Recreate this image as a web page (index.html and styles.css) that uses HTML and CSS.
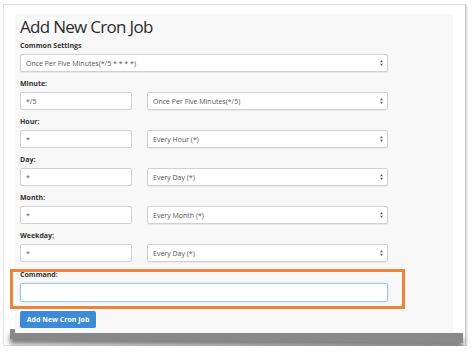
FILE: index.html
```html
<!DOCTYPE html>
<html lang="en">
<head>
<meta charset="UTF-8" />
<title>Add New Cron Job</title>
<link rel="stylesheet" href="styles.css">
</head>
<body>

<div class="sheet">
    <div class="panel">
        <h1>Add New Cron Job</h1>

        <div class="field">
            <label class="field-label">Common Settings</label>
            <div class="select-wrap">
                <select><option>Once Per Five Minutes(*/5 * * * *)</option></select>
                <svg class="arrows" viewBox="0 0 4 8"><path d="M2 0L4 3H0z M2 8L4 5H0z"/></svg>
            </div>
        </div>

        <div class="field">
            <label class="field-label">Minute:</label>
            <div class="pair">
                <input type="text" value="*/5" />
                <div class="select-wrap">
                    <select><option>Once Per Five Minutes(*/5)</option></select>
                    <svg class="arrows" viewBox="0 0 4 8"><path d="M2 0L4 3H0z M2 8L4 5H0z"/></svg>
                </div>
            </div>
        </div>

        <div class="field">
            <label class="field-label">Hour:</label>
            <div class="pair">
                <input type="text" value="*" />
                <div class="select-wrap">
                    <select><option>Every Hour (*)</option></select>
                    <svg class="arrows" viewBox="0 0 4 8"><path d="M2 0L4 3H0z M2 8L4 5H0z"/></svg>
                </div>
            </div>
        </div>

        <div class="field">
            <label class="field-label">Day:</label>
            <div class="pair">
                <input type="text" value="*" />
                <div class="select-wrap">
                    <select><option>Every Day (*)</option></select>
                    <svg class="arrows" viewBox="0 0 4 8"><path d="M2 0L4 3H0z M2 8L4 5H0z"/></svg>
                </div>
            </div>
        </div>

        <div class="field">
            <label class="field-label">Month:</label>
            <div class="pair">
                <input type="text" value="*" />
                <div class="select-wrap">
                    <select><option>Every Month (*)</option></select>
                    <svg class="arrows" viewBox="0 0 4 8"><path d="M2 0L4 3H0z M2 8L4 5H0z"/></svg>
                </div>
            </div>
        </div>

        <div class="field">
            <label class="field-label">Weekday:</label>
            <div class="pair">
                <input type="text" value="*" />
                <div class="select-wrap">
                    <select><option>Every Day (*)</option></select>
                    <svg class="arrows" viewBox="0 0 4 8"><path d="M2 0L4 3H0z M2 8L4 5H0z"/></svg>
                </div>
            </div>
        </div>

        <div class="field command">
            <label class="field-label">Command:</label>
            <input type="text" class="command-input" value="" />
        </div>

        <button class="add-button">Add New Cron Job</button>
    </div>
</div>

</body>
</html>
```

FILE: styles.css
```css
:root {
    --font-family: 'Open Sans', 'Noto Sans', Arial, sans-serif;
    --text-color: #333;
    --border-color: #d0d0d0;
    --panel-bg: #f8f8f8;
    --highlight: #f0833a;
    --primary: #3d8ad6;
}

body {
    margin: 0;
    background: #fff;
    font-family: var(--font-family);
    color: var(--text-color);
}

.sheet {
    position: relative;
    z-index: 0;
    box-sizing: border-box;
    width: 463px;
    height: 342px;
    margin: 4px 0 0 3px;
    padding: 9px 12px 12px 11px;
    background: #fff;
    border: 1px solid #e4e4e4;
    border-right-color: #c8c8c8;
    box-shadow: 1px 1px 2px rgba(0, 0, 0, 0.18);
}

/* curled paper shadow under the sheet */
.sheet::after {
    content: "";
    position: absolute;
    left: 6px;
    right: 2px;
    bottom: 6px;
    height: 10px;
    background: #888;
    box-shadow: 0 5px 5px rgba(0, 0, 0, 0.5);
    transform: rotate(0.5deg);
    transform-origin: left bottom;
    z-index: -1;
}

.panel {
    height: 100%;
    box-sizing: border-box;
    padding: 3px 0 0 5px;
    background: var(--panel-bg);
}

h1 {
    margin: 0 0 4px;
    font-size: 17px;
    line-height: 20px;
    font-weight: 400;
    letter-spacing: -0.7px;
    color: #2b2b2b;
}

.field {
    width: 368px;
    margin-bottom: 7px;
}

.field-label {
    display: block;
    font-size: 7px;
    line-height: 10px;
    font-weight: 700;
    margin-bottom: 3px;
}

.pair {
    display: flex;
    gap: 15px;
}

input,
select {
    display: block;
    box-sizing: border-box;
    height: 18px;
    margin: 0;
    padding: 0 5px;
    font-family: var(--font-family);
    font-size: 7px;
    color: #555;
    background: #fff;
    border: 1px solid var(--border-color);
    border-radius: 2px;
    outline: none;
}

.pair input {
    width: 112px;
    flex-shrink: 0;
}

.select-wrap {
    position: relative;
    flex: 1;
}

.select-wrap select {
    width: 100%;
    appearance: none;
    -webkit-appearance: none;
    box-shadow: 0 1px 1px rgba(0, 0, 0, 0.06);
}

.arrows {
    position: absolute;
    right: 5px;
    top: 6px;
    width: 3px;
    height: 6px;
    fill: #666;
}

.command {
    position: relative;
    margin-top: 8px;
    margin-bottom: 9px;
}

/* orange annotation frame */
.command::before {
    content: "";
    position: absolute;
    left: -10px;
    right: -17px;
    top: -1px;
    bottom: -7px;
    border: 3px solid var(--highlight);
}

.command-input {
    width: 100%;
    height: 19px;
    border-color: #a3c8ea;
    box-shadow: 0 0 2px rgba(102, 175, 233, 0.5);
}

.add-button {
    display: block;
    width: 76px;
    height: 17px;
    padding: 0;
    border: none;
    border-radius: 2px;
    background: var(--primary);
    color: #fff;
    font-family: var(--font-family);
    font-size: 7px;
    font-weight: 700;
}
```
